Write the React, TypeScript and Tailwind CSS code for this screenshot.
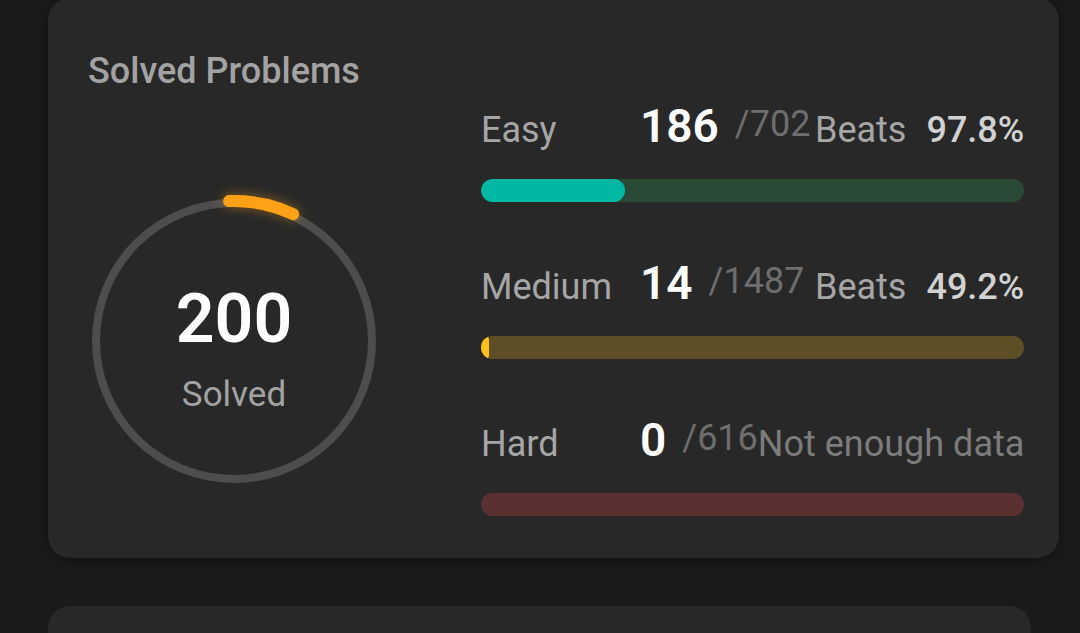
import React from "react";

type Level = {
  label: string;
  solved: number;
  total: number;
  beats: string | null;
  fill: string;
  track: string;
};

const levels: Level[] = [
  { label: "Easy", solved: 186, total: 702, beats: "97.8%", fill: "bg-[#00b8a3]", track: "bg-[#2b4a36]" },
  { label: "Medium", solved: 14, total: 1487, beats: "49.2%", fill: "bg-[#ffc01e]", track: "bg-[#5e4e26]" },
  { label: "Hard", solved: 0, total: 616, beats: null, fill: "bg-[#ef4743]", track: "bg-[#5a3030]" },
];

function Ring() {
  // arc from -2deg to 25deg, measured clockwise from the top
  const c = 148;
  const r = 140;
  const pt = (deg: number) => {
    const a = (deg * Math.PI) / 180;
    return `${(c + r * Math.sin(a)).toFixed(2)} ${(c - r * Math.cos(a)).toFixed(2)}`;
  };
  return (
    <div className="relative w-[296px] h-[296px] ml-[-2px] mt-[98px]">
      <svg width="296" height="296" viewBox="0 0 296 296" className="overflow-visible">
        <circle cx={c} cy={c} r={138} fill="none" stroke="#4d4d4d" strokeWidth={8} />
        <path
          d={`M${pt(-2)} A${r} ${r} 0 0 1 ${pt(25)}`}
          fill="none"
          stroke="#ffa116"
          strokeWidth={12}
          strokeLinecap="round"
          className="drop-shadow-[0_0_6px_rgba(255,161,22,0.45)]"
        />
      </svg>
      <div className="absolute inset-0 flex flex-col items-center pt-[90px]">
        <span className="text-[68px] leading-[72px] font-semibold text-white">200</span>
        <span className="mt-[19px] text-[35px] leading-[42px] text-[#a3a3a3]">Solved</span>
      </div>
    </div>
  );
}

function LevelRow({ level, first }: { level: Level; first: boolean }) {
  const pct = (level.solved / level.total) * 100;
  return (
    <div className={first ? "mt-[5px]" : "mt-[55px]"}>
      <div className="flex items-baseline leading-[48px] whitespace-nowrap">
        <span className="w-[159px] shrink-0 text-[36px] text-[#a6a6a6]">{level.label}</span>
        <span className="text-[46px] font-semibold text-white">
          {level.solved}
          <span className="ml-4 text-[36px] font-normal text-[#6e6e6e] align-[6px]">/{level.total}</span>
        </span>
        {level.beats ? (
          <span className="ml-auto text-[36px] text-[#a6a6a6]">
            Beats<span className="ml-[20px] font-medium text-[#d2d2d2]">{level.beats}</span>
          </span>
        ) : (
          <span className="ml-auto text-[36px] text-[#7c7c7c]">Not enough data</span>
        )}
      </div>
      <div className={`mt-[25px] h-[23px] rounded-full overflow-hidden ${level.track}`}>
        {level.solved > 0 && (
          <div className={`h-full rounded-full ${level.fill}`} style={{ width: `${Math.max(pct, 1.5)}%` }} />
        )}
      </div>
    </div>
  );
}

export default function App() {
  return (
    <div className="h-[633px] bg-[#1a1a1a] font-['Roboto','Noto_Sans',sans-serif] overflow-hidden">
      <div className="ml-[48px] mt-[-2px] w-[1011px] rounded-[22px] bg-[#282828] shadow-[0_2px_10px_rgba(0,0,0,0.35)] pl-[40px] pr-[38px] pt-[49px] pb-[42px]">
        <h2 className="text-[36px] leading-[48px] font-medium text-[#a3a3a3]">Solved Problems</h2>
        <div className="flex">
          <div className="w-[393px] shrink-0">
            <Ring />
          </div>
          <div className="flex-1">
            {levels.map((l, i) => (
              <LevelRow key={l.label} level={l} first={i === 0} />
            ))}
          </div>
        </div>
      </div>
      <div className="ml-[48px] mt-[48px] w-[983px] h-[60px] rounded-[22px] bg-[#282828]" />
    </div>
  );
}
